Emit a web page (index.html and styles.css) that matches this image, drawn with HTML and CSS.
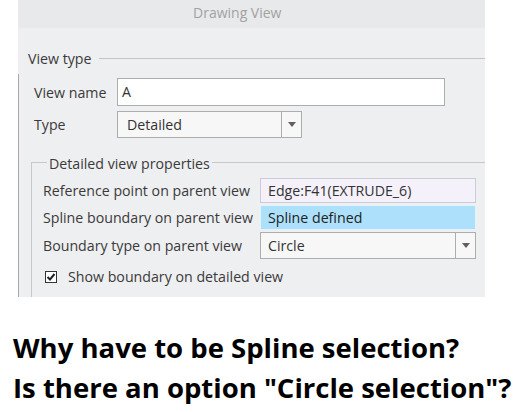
FILE: index.html
```html
<!DOCTYPE html>
<html>
<head>
<meta charset="utf-8">
<link rel="stylesheet" href="styles.css">
</head>
<body>
<div class="dialog">
  <div class="titlebar">Drawing View</div>
  <div class="group-head"><span class="group-title">View type</span><span class="rule"></span></div>
  <div class="group-body">
    <div class="row">
      <span class="label">View name</span>
      <div class="text-input">A</div>
    </div>
    <div class="row row-type">
      <span class="label">Type</span>
      <div class="select select-type">
        <span class="value">Detailed</span>
        <span class="btn"><svg width="8" height="5" viewBox="0 0 8 5"><polygon points="0,0 8,0 4,5" fill="#606060"/></svg></span>
      </div>
    </div>
    <fieldset class="details">
      <legend>Detailed view properties</legend>
      <div class="prow">
        <span class="plabel">Reference point on parent view</span>
        <div class="field field-ref">Edge:F41(EXTRUDE_6)</div>
      </div>
      <div class="prow">
        <span class="plabel">Spline boundary on parent view</span>
        <div class="field field-spline">Spline defined</div>
      </div>
      <div class="prow prow-select">
        <span class="plabel">Boundary type on parent view</span>
        <div class="select select-boundary">
          <span class="value">Circle</span>
          <span class="btn"><svg width="8" height="5" viewBox="0 0 8 5"><polygon points="0,0 8,0 4,5" fill="#606060"/></svg></span>
        </div>
      </div>
      <div class="check-row">
        <span class="checkbox"><svg width="10" height="10" viewBox="0 0 10 10"><polyline points="1.5,5 4,7.5 8.5,2" fill="none" stroke="#222" stroke-width="2"/></svg></span>
        <span class="check-label">Show boundary on detailed view</span>
      </div>
    </fieldset>
  </div>
</div>
<div class="question">
  <p>Why have to be Spline selection?</p>
  <p>Is there an option "Circle selection"?</p>
</div>
</body>
</html>
```
FILE: styles.css
```css
body {
  margin: 0;
  background: #ffffff;
  font-family: "Open Sans", "Noto Sans", sans-serif;
  color: #3a3a3a;
}
.dialog {
  width: 467px;
  height: 297px;
  margin-left: 18px;
  background: #eeeff1;
  display: flex;
  flex-direction: column;
  font-size: 14.2px;
}
.titlebar {
  height: 28px;
  line-height: 26px;
  background: #e8e9eb;
  color: #a2a2a2;
  padding-left: 175px;
  box-sizing: border-box;
  font-size: 14px;
}
.group-head {
  display: flex;
  align-items: center;
  height: 20px;
  margin-top: 20px;
  padding-left: 10px;
}
.group-head .rule {
  flex: 1;
  height: 1px;
  background: #c4c4c4;
  margin-left: 7px;
}
.group-body {
  flex: 1;
  margin-top: 6px;
  border-left: 1px solid #a8a8a8;
  padding: 4px 0 0 12px;
  display: flex;
  flex-direction: column;
  min-height: 0;
}
.row {
  display: flex;
  align-items: center;
  padding-left: 3px;
}
.row-type {
  margin-top: 5px;
}
.label {
  width: 83px;
}
.text-input {
  width: 328px;
  height: 28px;
  box-sizing: border-box;
  border: 1px solid #adadad;
  background: #ffffff;
  padding-left: 4px;
  line-height: 26px;
  color: #333;
}
.select {
  display: flex;
  box-sizing: border-box;
  border: 1px solid #adadad;
  background: #f7f7f7;
  color: #333;
}
.select .value {
  flex: 1;
}
.select .btn {
  width: 19px;
  border-left: 1px solid #adadad;
  display: flex;
  align-items: center;
  justify-content: center;
}
.select-type {
  width: 185px;
  height: 27px;
  line-height: 25px;
}
.select-type .value {
  padding-left: 9px;
}
.details {
  flex: 1;
  margin: 12px 0 0 0;
  padding: 4px 0 0 11px;
  border: 1px solid #c8c8c8;
  border-right: none;
  border-bottom: none;
  min-width: 0;
}
.details legend {
  margin-left: 4px;
  padding: 4px 2px 0 2px;
  line-height: 20px;
}
.prow {
  display: flex;
  align-items: center;
  margin-bottom: 2px;
}
.prow-select {
  margin-top: 1px;
}
.plabel {
  width: 217px;
}
.field {
  width: 216px;
  height: 25px;
  box-sizing: border-box;
  border: 1px solid #cccccc;
  padding-left: 7px;
  line-height: 23px;
  color: #333;
}
.field-ref {
  background: #f4f1fb;
  border-color: #cdcbd5;
}
.field-spline {
  background: #ade1fb;
  border-color: #e2f3fc;
  color: #222;
}
.select-boundary {
  width: 216px;
  height: 27px;
  line-height: 25px;
}
.select-boundary .value {
  padding-left: 7px;
}
.check-row {
  display: flex;
  align-items: center;
  margin-top: 8px;
  padding-left: 2px;
}
.checkbox {
  width: 12px;
  height: 12px;
  box-sizing: border-box;
  border: 1px solid #333;
  background: #fff;
  display: flex;
  align-items: center;
  justify-content: center;
  margin-right: 11px;
}
.question {
  padding: 31px 0 0 13px;
  font-family: "Open Sans", sans-serif;
  font-weight: bold;
  font-size: 27.5px;
  color: #000;
}
.question p {
  margin: 0;
  line-height: 40px;
}
```
